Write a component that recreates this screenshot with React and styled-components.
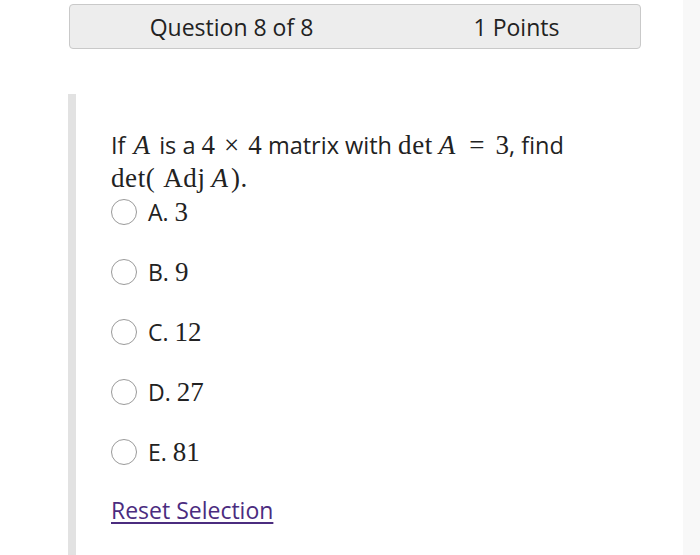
import React from 'react';
import styled, { createGlobalStyle } from 'styled-components';

const Global = createGlobalStyle`
  html, body {
    margin: 0;
    padding: 0;
    background: #fff;
  }
  body {
    font-family: 'Open Sans', 'Liberation Sans', sans-serif;
    color: #222;
  }
`;

const Page = styled.div`
  display: flex;
  width: 700px;
  height: 555px;
  overflow: hidden;
`;

const Main = styled.div`
  flex: 1;
  display: flex;
  flex-direction: column;
  padding-left: 68px;
`;

const Gutter = styled.div`
  width: 17px;
  background: #f8f8f8;
`;

const Header = styled.div`
  display: grid;
  grid-template-columns: 1fr 1fr;
  box-sizing: border-box;
  width: 572px;
  height: 45px;
  margin: 4px 0 0 1px;
  background: #ededed;
  border: 1px solid #c9c9c9;
  border-radius: 4px;
  align-items: center;
`;

const HeaderCell = styled.div`
  padding-left: 38px;
  text-align: center;
  font-size: 23px;
  color: #222;
`;

const QuestionPanel = styled.div`
  flex: 1;
  margin-top: 45px;
  border-left: 8px solid #e2e2e2;
  padding: 35px 0 0 35px;
`;

const Prompt = styled.div`
  font-size: 23.5px;
  line-height: 33px;
  color: #222;
`;

/* upright math text (digits, det, Adj) */
const M = styled.span`
  font-family: 'Liberation Serif', 'Times New Roman', serif;
  font-size: 27px;
  letter-spacing: ${p => (p.$word ? '0.6px' : '0')};
`;

/* math variable */
const V = styled.span`
  font-family: 'Liberation Serif', 'Times New Roman', serif;
  font-size: 27px;
  font-style: italic;
  margin: 0 3px 0 2px;
`;

const Op = styled.span`
  font-family: 'Liberation Serif', 'Times New Roman', serif;
  font-size: 27px;
  margin: 0 ${p => p.$space};
`;

const Options = styled.div`
  display: flex;
  flex-direction: column;
  gap: 26px;
`;

const Option = styled.label`
  display: flex;
  align-items: center;
  height: 34px;
  font-size: 23px;
  color: #222;
`;

const Radio = styled.span`
  box-sizing: border-box;
  width: 26px;
  height: 26px;
  border-radius: 50%;
  border: 1.5px solid #9a9a9a;
  background: #fff;
  margin-right: 11px;
`;

const Reset = styled.a`
  display: inline-block;
  margin-top: 25px;
  font-size: 23px;
  line-height: 33px;
  color: #4b2c7f;
  text-decoration: underline;
  text-underline-offset: 3px;
`;

const options = [
  ['A.', '3'],
  ['B.', '9'],
  ['C.', '12'],
  ['D.', '27'],
  ['E.', '81'],
];

export default function App() {
  return (
    <Page>
      <Global />
      <Main>
        <Header>
          <HeaderCell>Question 8 of 8</HeaderCell>
          <HeaderCell>1 Points</HeaderCell>
        </Header>
        <QuestionPanel>
          <Prompt>
            If <V>A</V> is a <M>4</M><Op $space="9px">×</Op><M>4</M> matrix with{' '}
            <M $word>det</M>&#8201;<V>A</V><Op $space="11px">=</Op><M>3</M>, find
            <br />
            <M $word>det(</M>&#8196;<M $word>Adj</M>&#8201;<V>A</V><M $word>).</M>
          </Prompt>
          <Options>
            {options.map(([letter, value]) => (
              <Option key={letter}>
                <Radio />
                {letter}&nbsp;<M>{value}</M>
              </Option>
            ))}
          </Options>
          <div>
            <Reset href="#">Reset Selection</Reset>
          </div>
        </QuestionPanel>
      </Main>
      <Gutter />
    </Page>
  );
}
